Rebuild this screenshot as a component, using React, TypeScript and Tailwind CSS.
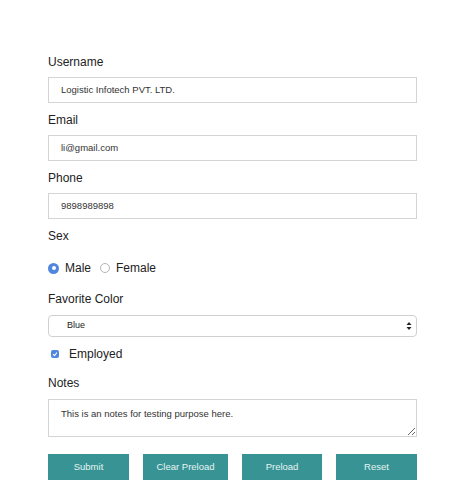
import React from "react";

const font = { fontFamily: '"Liberation Sans", Arial, sans-serif' };

function Label({ children, className = "" }: { children: React.ReactNode; className?: string }) {
  return <div className={`h-[20px] leading-[20px] text-[12px] text-[#222] ${className}`}>{children}</div>;
}

function TextInput({ value }: { value: string }) {
  return (
    <div className="mt-[5px] h-[26px] border border-[#d4d4d4] bg-white flex items-center pl-[12px] text-[9.5px] text-[#333]">
      {value}
    </div>
  );
}

export default function App() {
  return (
    <div className="w-[474px] h-[503px] bg-white" style={font}>
      <div className="pl-[48px] pr-[57px] pt-[52px]">
        <Label>Username</Label>
        <TextInput value="Logistic Infotech PVT. LTD." />

        <Label className="mt-[7px]">Email</Label>
        <TextInput value="li@gmail.com" />

        <Label className="mt-[7px]">Phone</Label>
        <TextInput value="9898989898" />

        <Label className="mt-[7px]">Sex</Label>
        <div className="mt-[12px] h-[20px] flex items-center text-[12px] text-[#222]">
          <span className="w-[11px] h-[11px] rounded-full bg-[#4f87e0] flex items-center justify-center">
            <span className="w-[4px] h-[4px] rounded-full bg-white" />
          </span>
          <span className="ml-[6px]">Male</span>
          <span className="ml-[9px] w-[10px] h-[10px] rounded-full border border-[#b5b5b5] bg-white" />
          <span className="ml-[6px]">Female</span>
        </div>

        <Label className="mt-[11px]">Favorite Color</Label>
        <div className="mt-[6px] h-[22px] border border-[#d0d0d0] rounded-[4px] bg-white flex items-center justify-between pl-[18px] pr-[4px] text-[9px] text-[#222]">
          <span>Blue</span>
          <svg width="6" height="10" viewBox="0 0 6 10">
            <path d="M3 1 L5.5 4 H0.5 Z" fill="#222" />
            <path d="M3 9 L5.5 6 H0.5 Z" fill="#222" />
          </svg>
        </div>

        <div className="mt-[7px] h-[20px] flex items-center text-[12px] text-[#222]">
          <span className="ml-[3px] w-[8px] h-[8px] rounded-[2px] bg-[#4f87e0] flex items-center justify-center">
            <svg width="6" height="6" viewBox="0 0 6 6">
              <path d="M1 3.2 L2.5 4.6 L5 1.5" stroke="white" strokeWidth="1.1" fill="none" />
            </svg>
          </span>
          <span className="ml-[10px]">Employed</span>
        </div>

        <Label className="mt-[9px]">Notes</Label>
        <textarea
          readOnly
          defaultValue="This is an notes for testing purpose here."
          className="block mt-[6px] w-full h-[38px] border border-[#d4d4d4] bg-white pl-[12px] pt-[7px] text-[9.5px] text-[#333] outline-none"
          style={font}
        />

        <div className="mt-[17px] flex gap-[14px]">
          <button className="w-[81px] h-[26px] bg-[#379394] text-[#e6f3f3] text-[9.5px]">Submit</button>
          <button className="w-[85px] h-[26px] bg-[#379394] text-[#e6f3f3] text-[9.5px]">Clear Preload</button>
          <button className="w-[80px] h-[26px] bg-[#379394] text-[#e6f3f3] text-[9.5px]">Preload</button>
          <button className="w-[81px] h-[26px] bg-[#379394] text-[#e6f3f3] text-[9.5px]">Reset</button>
        </div>
      </div>
    </div>
  );
}
